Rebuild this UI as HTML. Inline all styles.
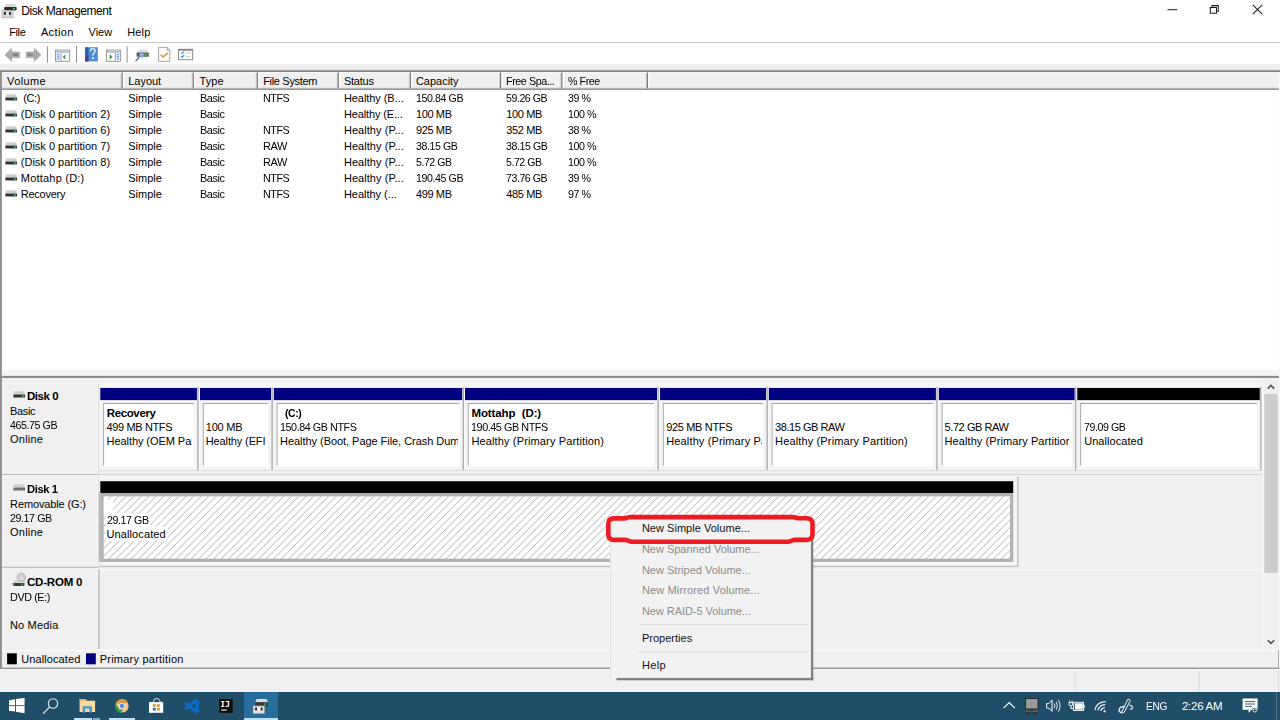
<!DOCTYPE html>
<html><head><meta charset="utf-8"><title>Disk Management</title>
<style>
html,body{margin:0;padding:0;width:1280px;height:720px;overflow:hidden;background:#fff;}
body{position:relative;font-family:"Liberation Sans",sans-serif;font-size:11px;}
body>div,body>svg,body>span{position:absolute;}
.t{position:absolute;white-space:pre;}
svg{display:block;overflow:visible;}
</style></head><body>
<svg style="left:0;top:0" width="1280" height="720" viewBox="0 0 1280 720">
<rect x="0.00" y="0.00" width="1280.00" height="64.00" fill="#fff"/>
<rect x="0.00" y="42.00" width="1280.00" height="1.00" fill="#c6c6c6"/>
<rect x="0.00" y="64.00" width="1280.00" height="628.00" fill="#f0f0f0"/>
<rect x="0.00" y="692.00" width="1280.00" height="28.00" fill="#204e68"/>
<rect x="2.00" y="72.00" width="1277.00" height="299.00" fill="#fff"/>
<rect x="0.00" y="69.70" width="1280.00" height="1.20" fill="#c4c4c4"/>
<rect x="0.00" y="70.60" width="1280.00" height="1.30" fill="#6e6e6e"/>
<rect x="2.00" y="72.90" width="1277.00" height="15.50" fill="#f0f0f0"/>
<rect x="2.00" y="71.90" width="1277.00" height="1.00" fill="#f7f7f7"/>
<rect x="2.00" y="88.35" width="1277.00" height="1.40" fill="#757575"/>
<rect x="2.00" y="87.60" width="1277.00" height="0.80" fill="#cfcfcf"/>
<rect x="121.35" y="72.60" width="1.50" height="15.80" fill="#7a7a7a"/>
<rect x="122.85" y="72.60" width="1.30" height="15.20" fill="#fdfdfd"/>
<rect x="120.50" y="73.20" width="0.85" height="15.00" fill="#cdcdcd"/>
<rect x="192.45" y="72.60" width="1.50" height="15.80" fill="#7a7a7a"/>
<rect x="193.95" y="72.60" width="1.30" height="15.20" fill="#fdfdfd"/>
<rect x="191.60" y="73.20" width="0.85" height="15.00" fill="#cdcdcd"/>
<rect x="256.55" y="72.60" width="1.50" height="15.80" fill="#7a7a7a"/>
<rect x="258.05" y="72.60" width="1.30" height="15.20" fill="#fdfdfd"/>
<rect x="255.70" y="73.20" width="0.85" height="15.00" fill="#cdcdcd"/>
<rect x="337.45" y="72.60" width="1.50" height="15.80" fill="#7a7a7a"/>
<rect x="338.95" y="72.60" width="1.30" height="15.20" fill="#fdfdfd"/>
<rect x="336.60" y="73.20" width="0.85" height="15.00" fill="#cdcdcd"/>
<rect x="409.65" y="72.60" width="1.50" height="15.80" fill="#7a7a7a"/>
<rect x="411.15" y="72.60" width="1.30" height="15.20" fill="#fdfdfd"/>
<rect x="408.80" y="73.20" width="0.85" height="15.00" fill="#cdcdcd"/>
<rect x="499.95" y="72.60" width="1.50" height="15.80" fill="#7a7a7a"/>
<rect x="501.45" y="72.60" width="1.30" height="15.20" fill="#fdfdfd"/>
<rect x="499.10" y="73.20" width="0.85" height="15.00" fill="#cdcdcd"/>
<rect x="561.15" y="72.60" width="1.50" height="15.80" fill="#7a7a7a"/>
<rect x="562.65" y="72.60" width="1.30" height="15.20" fill="#fdfdfd"/>
<rect x="560.30" y="73.20" width="0.85" height="15.00" fill="#cdcdcd"/>
<rect x="646.55" y="72.60" width="1.50" height="15.80" fill="#7a7a7a"/>
<rect x="648.05" y="72.60" width="1.30" height="15.20" fill="#fdfdfd"/>
<rect x="645.70" y="73.20" width="0.85" height="15.00" fill="#cdcdcd"/>
<rect x="0.00" y="70.60" width="1.00" height="598.40" fill="#8e8e8e"/>
<rect x="1.00" y="70.60" width="0.75" height="598.40" fill="#7e7e7e"/>
<rect x="1279.00" y="72.00" width="1.00" height="597.00" fill="#fafafa"/>
<rect x="2.00" y="370.30" width="1277.00" height="3.00" fill="#f1f1f1"/>
<rect x="3.00" y="373.00" width="1276.00" height="1.00" fill="#fbfbfb"/>
<rect x="2.00" y="374.00" width="1277.00" height="2.10" fill="#ececec"/>
<rect x="0.00" y="376.10" width="1279.00" height="1.75" fill="#808080"/>
<rect x="2.00" y="382.60" width="1261.00" height="1.00" fill="#f8f8f8"/>
<rect x="97.40" y="383.00" width="1.00" height="91.00" fill="#fbfbfb"/>
<rect x="98.20" y="383.00" width="0.90" height="91.00" fill="#d6d6d6"/>
<rect x="2.00" y="474.00" width="96.40" height="0.90" fill="#b0b0b0"/>
<rect x="98.40" y="474.00" width="1164.60" height="0.90" fill="#d0d0d0"/>
<rect x="99.50" y="469.80" width="1163.50" height="0.90" fill="#d4d4d4"/>
<rect x="97.40" y="476.00" width="1.00" height="91.00" fill="#fbfbfb"/>
<rect x="98.20" y="476.00" width="0.90" height="91.00" fill="#d6d6d6"/>
<rect x="2.00" y="566.80" width="96.40" height="0.90" fill="#adadad"/>
<rect x="99.30" y="476.50" width="918.50" height="90.00" fill="#f6f6f6"/>
<rect x="1017.10" y="476.50" width="1.40" height="90.50" fill="#bebebe"/>
<rect x="99.30" y="565.80" width="919.20" height="1.25" fill="#bebebe"/>
<rect x="99.30" y="568.90" width="1164.00" height="1.00" fill="#fbfbfb"/>
<rect x="97.60" y="569.00" width="1.00" height="81.00" fill="#fbfbfb"/>
<rect x="98.40" y="569.40" width="1.00" height="80.00" fill="#a4a4a4"/>
<rect x="2.00" y="649.80" width="1277.00" height="1.00" fill="#fcfcfc"/>
<rect x="0.00" y="667.60" width="1279.50" height="1.70" fill="#969696"/>
<rect x="0.00" y="669.20" width="1280.00" height="1.00" fill="#fafafa"/>
<rect x="7.10" y="653.30" width="9.70" height="11.00" fill="#000"/>
<rect x="86.00" y="653.30" width="9.80" height="11.00" fill="#000080"/>
<rect x="1278.00" y="650.50" width="1.00" height="17.30" fill="#a4a4a4"/>
<rect x="1074.40" y="671.00" width="1.00" height="20.50" fill="#dadada"/>
<rect x="1198.60" y="671.00" width="1.00" height="20.50" fill="#dadada"/>
<rect x="1278.20" y="671.00" width="1.00" height="20.50" fill="#dadada"/>
<rect x="1263.20" y="383.00" width="1.00" height="267.00" fill="#fbfbfb"/>
<rect x="1264.20" y="383.00" width="14.20" height="267.00" fill="#f0f0f0"/>
<rect x="1264.30" y="394.00" width="13.40" height="179.00" fill="#cdcdcd"/>
<path d="M1267.8 388.6 L1271 385.4 L1274.2 388.6" fill="none" stroke="#505050" stroke-width="1.5"/>
<path d="M1267.8 640.2 L1271 643.4 L1274.2 640.2" fill="none" stroke="#505050" stroke-width="1.5"/>
<rect x="99.30" y="383.00" width="1163.70" height="87.00" fill="#f6f6f6"/>
<rect x="100.30" y="386.90" width="96.60" height="1.10" fill="#fff"/>
<rect x="100.30" y="387.90" width="96.60" height="12.60" fill="#000080"/>
<rect x="100.30" y="400.50" width="96.60" height="69.30" fill="#f4f4f4"/>
<rect x="100.30" y="400.50" width="96.60" height="1.00" fill="#fdfdfd"/>
<rect x="103.10" y="403.00" width="90.80" height="63.60" fill="#fff"/>
<rect x="103.10" y="403.00" width="90.80" height="1.00" fill="#a2a2a2"/>
<rect x="103.10" y="403.00" width="1.00" height="62.60" fill="#a9a9a9"/>
<rect x="197.35" y="386.90" width="1.45" height="83.00" fill="#a8a8a8"/>
<rect x="198.80" y="386.90" width="0.90" height="83.00" fill="#fbfbfb"/>
<rect x="200.00" y="386.90" width="71.00" height="1.10" fill="#fff"/>
<rect x="200.00" y="387.90" width="71.00" height="12.60" fill="#000080"/>
<rect x="200.00" y="400.50" width="71.00" height="69.30" fill="#f4f4f4"/>
<rect x="200.00" y="400.50" width="71.00" height="1.00" fill="#fdfdfd"/>
<rect x="202.80" y="403.00" width="65.20" height="63.60" fill="#fff"/>
<rect x="202.80" y="403.00" width="65.20" height="1.00" fill="#a2a2a2"/>
<rect x="202.80" y="403.00" width="1.00" height="62.60" fill="#a9a9a9"/>
<rect x="271.45" y="386.90" width="1.45" height="83.00" fill="#a8a8a8"/>
<rect x="272.90" y="386.90" width="0.90" height="83.00" fill="#fbfbfb"/>
<rect x="273.80" y="386.90" width="188.40" height="1.10" fill="#fff"/>
<rect x="273.80" y="387.90" width="188.40" height="12.60" fill="#000080"/>
<rect x="273.80" y="400.50" width="188.40" height="69.30" fill="#f4f4f4"/>
<rect x="273.80" y="400.50" width="188.40" height="1.00" fill="#fdfdfd"/>
<rect x="276.60" y="403.00" width="182.60" height="63.60" fill="#fff"/>
<rect x="276.60" y="403.00" width="182.60" height="1.00" fill="#a2a2a2"/>
<rect x="276.60" y="403.00" width="1.00" height="62.60" fill="#a9a9a9"/>
<rect x="462.65" y="386.90" width="1.45" height="83.00" fill="#a8a8a8"/>
<rect x="464.10" y="386.90" width="0.90" height="83.00" fill="#fbfbfb"/>
<rect x="465.00" y="386.90" width="192.00" height="1.10" fill="#fff"/>
<rect x="465.00" y="387.90" width="192.00" height="12.60" fill="#000080"/>
<rect x="465.00" y="400.50" width="192.00" height="69.30" fill="#f4f4f4"/>
<rect x="465.00" y="400.50" width="192.00" height="1.00" fill="#fdfdfd"/>
<rect x="467.80" y="403.00" width="186.20" height="63.60" fill="#fff"/>
<rect x="467.80" y="403.00" width="186.20" height="1.00" fill="#a2a2a2"/>
<rect x="467.80" y="403.00" width="1.00" height="62.60" fill="#a9a9a9"/>
<rect x="657.45" y="386.90" width="1.45" height="83.00" fill="#a8a8a8"/>
<rect x="658.90" y="386.90" width="0.90" height="83.00" fill="#fbfbfb"/>
<rect x="660.00" y="386.90" width="106.00" height="1.10" fill="#fff"/>
<rect x="660.00" y="387.90" width="106.00" height="12.60" fill="#000080"/>
<rect x="660.00" y="400.50" width="106.00" height="69.30" fill="#f4f4f4"/>
<rect x="660.00" y="400.50" width="106.00" height="1.00" fill="#fdfdfd"/>
<rect x="662.80" y="403.00" width="100.20" height="63.60" fill="#fff"/>
<rect x="662.80" y="403.00" width="100.20" height="1.00" fill="#a2a2a2"/>
<rect x="662.80" y="403.00" width="1.00" height="62.60" fill="#a9a9a9"/>
<rect x="766.45" y="386.90" width="1.45" height="83.00" fill="#a8a8a8"/>
<rect x="767.90" y="386.90" width="0.90" height="83.00" fill="#fbfbfb"/>
<rect x="768.80" y="386.90" width="167.10" height="1.10" fill="#fff"/>
<rect x="768.80" y="387.90" width="167.10" height="12.60" fill="#000080"/>
<rect x="768.80" y="400.50" width="167.10" height="69.30" fill="#f4f4f4"/>
<rect x="768.80" y="400.50" width="167.10" height="1.00" fill="#fdfdfd"/>
<rect x="771.60" y="403.00" width="161.30" height="63.60" fill="#fff"/>
<rect x="771.60" y="403.00" width="161.30" height="1.00" fill="#a2a2a2"/>
<rect x="771.60" y="403.00" width="1.00" height="62.60" fill="#a9a9a9"/>
<rect x="936.35" y="386.90" width="1.45" height="83.00" fill="#a8a8a8"/>
<rect x="937.80" y="386.90" width="0.90" height="83.00" fill="#fbfbfb"/>
<rect x="938.80" y="386.90" width="135.80" height="1.10" fill="#fff"/>
<rect x="938.80" y="387.90" width="135.80" height="12.60" fill="#000080"/>
<rect x="938.80" y="400.50" width="135.80" height="69.30" fill="#f4f4f4"/>
<rect x="938.80" y="400.50" width="135.80" height="1.00" fill="#fdfdfd"/>
<rect x="941.60" y="403.00" width="130.00" height="63.60" fill="#fff"/>
<rect x="941.60" y="403.00" width="130.00" height="1.00" fill="#a2a2a2"/>
<rect x="941.60" y="403.00" width="1.00" height="62.60" fill="#a9a9a9"/>
<rect x="1075.05" y="386.90" width="1.45" height="83.00" fill="#a8a8a8"/>
<rect x="1076.50" y="386.90" width="0.90" height="83.00" fill="#fbfbfb"/>
<rect x="1077.30" y="386.90" width="182.50" height="1.10" fill="#fff"/>
<rect x="1077.30" y="387.90" width="182.50" height="12.60" fill="#000"/>
<rect x="1077.30" y="400.50" width="182.50" height="69.30" fill="#f4f4f4"/>
<rect x="1077.30" y="400.50" width="182.50" height="1.00" fill="#fdfdfd"/>
<rect x="1080.10" y="403.00" width="176.70" height="63.60" fill="#fff"/>
<rect x="1080.10" y="403.00" width="176.70" height="1.00" fill="#a2a2a2"/>
<rect x="1080.10" y="403.00" width="1.00" height="62.60" fill="#a9a9a9"/>
<rect x="1260.25" y="386.90" width="1.45" height="83.00" fill="#a8a8a8"/>
<rect x="1261.70" y="386.90" width="0.90" height="83.00" fill="#fbfbfb"/>
<rect x="100.30" y="481.20" width="912.90" height="11.80" fill="#000"/>
<defs><pattern id="hatch" width="7.5" height="7.5" patternUnits="userSpaceOnUse" x="103.7" y="496.3"><rect width="7.5" height="7.5" fill="#fff"/><path d="M-1 1 L1 -1 M-1 8.5 L8.5 -1 M6.5 8.5 L8.5 6.5" stroke="#9a9a9a" stroke-width="0.8" fill="none"/></pattern></defs>
<rect x="100.30" y="493.00" width="913.00" height="69.00" fill="#b2b2b2"/>
<rect x="103.70" y="496.40" width="906.30" height="62.30" fill="url(#hatch)"/>
<rect x="99.10" y="493.00" width="1.20" height="69.00" fill="#ababab"/>
<rect x="103.70" y="499.50" width="9.50" height="14.00" fill="#fff"/>
</svg>
<!-- title icon -->
<svg style="left:1px;top:3px" width="17" height="16" viewBox="0 0 17 16">
 <path d="M5.3 0.9 H14 L15.4 3.9 H3.4 Z" fill="#d9d9d9"/>
 <rect x="3.2" y="3.9" width="12.4" height="3.5" rx="0.8" fill="#2b2b2b"/>
 <rect x="11.8" y="4.8" width="2.3" height="2.1" fill="#27b34a"/>
 <rect x="1" y="7.4" width="11" height="7.4" fill="#d6d6d6" stroke="#a9a9a9" stroke-width="0.7"/>
 <rect x="2.9" y="8.9" width="2" height="2.9" rx="0.5" fill="#222"/>
 <rect x="8" y="8.9" width="2" height="2.9" rx="0.5" fill="#222"/>
 <rect x="5.4" y="9.2" width="2.2" height="2.4" fill="#f4f4f4"/>
</svg>
<!-- window controls -->
<svg style="left:1160px;top:0" width="120" height="22" viewBox="0 0 120 22">
 <path d="M7.5 9.7 H17.3" stroke="#2a2a2a" stroke-width="1.05"/>
 <path d="M50.3 7.5 H56.5 V13.3 H50.3 Z M52.1 7.5 V5.6 H58.3 V11.2 H56.5" fill="none" stroke="#1c1c1c" stroke-width="1.05"/>
 <path d="M92.8 4.9 L102.2 14.2 M102.2 4.9 L92.8 14.2" stroke="#222" stroke-width="1.1"/>
</svg>
<!-- toolbar -->
<svg style="left:0;top:43px" width="200" height="21" viewBox="0 0 200 21">
 <!-- back -->
 <path d="M4.9 11.8 L11.6 5.4 V9 H19.4 V14.6 H11.6 V18.3 Z" fill="#a9a9a9" stroke="#9a9a9a" stroke-width="0.6"/>
 <rect x="13" y="10.8" width="5" height="2.2" fill="#7d7d7d"/>
 <!-- forward -->
 <path d="M41 11.8 L34.3 5.4 V9 H26.4 V14.6 H34.3 V18.3 Z" fill="#a9a9a9" stroke="#9a9a9a" stroke-width="0.6"/>
 <rect x="27.6" y="10.8" width="5" height="2.2" fill="#8a8a8a"/>
 <rect x="46.9" y="3.2" width="1.0" height="16.6" fill="#8f8f8f"/>
 <!-- console tree -->
 <rect x="55.6" y="7.1" width="14.1" height="11.2" fill="#fff" stroke="#8e8e8e" stroke-width="0.9"/>
 <rect x="56" y="7.5" width="13.3" height="2.4" fill="#b9c3cf"/>
 <rect x="56" y="9.9" width="4.6" height="8" fill="#e4ecf7"/>
 <rect x="60.6" y="9.9" width="0.8" height="8" fill="#8e8e8e"/>
 <rect x="57.2" y="11.2" width="2" height="1" fill="#3f8de0"/><rect x="57.2" y="13.3" width="2" height="1" fill="#3f8de0"/><rect x="57.2" y="15.4" width="2" height="1" fill="#3f8de0"/>
 <path d="M65.3 11.4 L62.6 13.9 L65.3 16.4 Z" fill="#2f9a48"/>
 <rect x="76" y="3.2" width="1.0" height="16.6" fill="#8f8f8f"/>
 <!-- help -->
 <rect x="85.2" y="4.2" width="12.6" height="14.2" fill="#4a8fd6"/>
 <rect x="85.2" y="4.2" width="3.2" height="14.2" fill="#2f5fae"/>
 <rect x="85.2" y="12.6" width="3.2" height="5.8" fill="#4a3f9f"/>
 <path d="M90.6 8.2 Q90.6 5.6 92.8 5.6 Q95.1 5.6 95.1 7.9 Q95.1 9.3 93.9 10.2 Q92.9 11 92.9 12.6" fill="none" stroke="#e9f1fb" stroke-width="1.35"/>
 <rect x="92.1" y="14.2" width="1.7" height="1.9" fill="#f4f8fd"/>
 <!-- console 2 -->
 <rect x="106.4" y="7.1" width="14.1" height="11.2" fill="#fff" stroke="#8e8e8e" stroke-width="0.9"/>
 <rect x="106.8" y="7.5" width="13.3" height="2.4" fill="#b9c3cf"/>
 <rect x="115.5" y="9.9" width="4.6" height="8" fill="#e4ecf7"/>
 <rect x="114.8" y="9.9" width="0.8" height="8" fill="#8e8e8e"/>
 <rect x="116.9" y="11.2" width="2" height="1" fill="#3f8de0"/><rect x="116.9" y="13.3" width="2" height="1" fill="#3f8de0"/><rect x="116.9" y="15.4" width="2" height="1" fill="#3f8de0"/>
 <path d="M109.6 11.2 L112.6 13.9 L109.6 16.6 Z" fill="#2f9a48"/>
 <rect x="126.6" y="3.2" width="1.0" height="16.6" fill="#8f8f8f"/>
 <!-- disk + magnifier -->
 <path d="M138.6 6.6 H146.8 L148.4 9.6 H136.8 Z" fill="#dcdcdc"/>
 <rect x="136.6" y="9.6" width="12.2" height="4.2" rx="0.6" fill="#5a5a5a"/>
 <rect x="143.6" y="10.5" width="3.9" height="2.4" fill="#2fae52"/>
 <circle cx="141.6" cy="11.9" r="2.3" fill="#9cc3ef" fill-opacity="0.8" stroke="#6a8fc8" stroke-width="0.7"/>
 <path d="M139.4 14 L135.6 18.2" stroke="#5a6f93" stroke-width="1.3"/>
 <!-- doc with check -->
 <path d="M158.6 4.4 H167 L169.8 7.2 V18.4 H158.6 Z" fill="#fdfdfd" stroke="#9c9c9c" stroke-width="0.9"/>
 <path d="M167 4.4 V7.2 H169.8" fill="none" stroke="#9c9c9c" stroke-width="0.8"/>
 <path d="M160.6 11.8 L163.2 14.0 L167.8 9.8" fill="none" stroke="#db8c22" stroke-width="1.35"/>
 <!-- list w/ checks -->
 <rect x="178.5" y="6.3" width="14.2" height="10.4" fill="#fff" stroke="#7e7e7e" stroke-width="0.9"/>
 <rect x="178.5" y="6.3" width="14.2" height="1.4" fill="#7e7e7e"/>
 <path d="M181 9.3 L182.2 10.5 L184.2 8.3 M181 13 L182.2 14.2 L184.2 12" fill="none" stroke="#3f9be8" stroke-width="1.2"/>
 <rect x="185.8" y="9.4" width="5" height="1" fill="#d0d0d0"/><rect x="185.8" y="13.1" width="5" height="1" fill="#d0d0d0"/>
</svg>
<svg style="left:12px;top:572px" width="15" height="15" viewBox="0 0 15 15"><path d="M2.2 8 H12.4 L13.5 11 H0.7 Z" fill="#d6d6d6"/><circle cx="9.4" cy="5.4" r="4.2" fill="#d4d4d4" stroke="#a9a9a9" stroke-width="0.9"/><circle cx="9.4" cy="5.4" r="1.9" fill="none" stroke="#cacaca" stroke-width="0.8"/><circle cx="9.4" cy="5.4" r="0.8" fill="#fff"/><rect x="0.9" y="11" width="11.5" height="3" rx="0.4" fill="#3c3c3c"/><rect x="0.9" y="11" width="1.8" height="3" fill="#6a6a6a"/><rect x="9.1" y="11.5" width="2.2" height="2.1" fill="#2faa4d"/></svg>
<!-- taskbar -->
<div style="left:243.8px;top:692px;width:34px;height:28px;background:#296d9b"></div>
<div style="left:243.8px;top:718px;width:34px;height:2px;background:#b9e1f8"></div>
<div style="left:74px;top:718px;width:18.4px;height:2px;background:#bfe4fb"></div>
<div style="left:92.8px;top:718px;width:7.2px;height:2px;background:#88a6d6"></div>
<div style="left:108.8px;top:718px;width:26.2px;height:2px;background:#bfe4fb"></div>
<svg style="left:0;top:692px" width="290" height="28" viewBox="0 0 290 28">
 <!-- windows logo -->
 <path d="M9 8.2 L15 7.3 V13 H9 Z M15.9 7.1 L24.6 5.9 V13 H15.9 Z M9 13.8 H15 V19.6 L9 18.8 Z M15.9 13.8 H24.6 V21.2 L15.9 19.8 Z" fill="#fff"/>
 <!-- search -->
 <circle cx="53" cy="11.5" r="4.7" fill="none" stroke="#e6ecf0" stroke-width="1.1"/>
 <path d="M49.5 15.2 L43.2 21.6" stroke="#e6ecf0" stroke-width="1.2"/>
 <!-- folder -->
 <path d="M79.6 7 H85.6 L86.8 8.8 H95.1 V20 H79.6 Z" fill="#f9dc9c"/>
 <path d="M79.6 7 H85.6 L86.8 8.8 H79.6 Z" fill="#eeb060"/>
 <path d="M82.6 20.8 V14.2 H91.9 V20.8 H89.4 V16.6 H85.1 V20.8 Z" fill="#4b93dd"/>
 <!-- chrome -->
 <circle cx="122" cy="14" r="6.6" fill="#f1c78a"/>
 <path d="M116 11.2 A6.6 6.6 0 0 1 127.8 10.4 L122 12 Z" fill="#e09a3e"/>
 <path d="M115.5 11.6 L119.4 17.4 L123 17.6 L120.6 20.9 A6.6 6.6 0 0 1 115.5 11.6 Z" fill="#2e9a44"/>
 <circle cx="122" cy="14" r="3" fill="#e8f1fb"/>
 <circle cx="122" cy="14" r="2.2" fill="#4a90e0"/>
 <!-- store -->
 <path d="M153.6 10 Q153.6 6.4 156.6 6.4 Q159.6 6.4 160.4 10" fill="none" stroke="#dfe7ee" stroke-width="1"/>
 <rect x="149" y="10.1" width="14.2" height="10.7" fill="#fff"/>
 <rect x="152.8" y="12.2" width="3" height="2.6" fill="#e09433"/><rect x="156.8" y="12.2" width="3" height="2.6" fill="#e09433"/>
 <rect x="152.8" y="15.8" width="3" height="2.7" fill="#1f6fd0"/><rect x="156.8" y="15.8" width="3" height="2.7" fill="#e09433"/>
 <!-- vscode -->
 <path d="M195.2 6.4 L198.9 8.2 V19.8 L195.2 21.6 L184 11.6 L185.3 9.9 L187.2 10.4 L192 14 L187.2 17.6 L185.3 18.1 L184 16.4 Z" fill="#0a6cc4"/>
 <path d="M195.4 11 L191.4 14 L195.4 17 Z" fill="#204e68"/>
 <!-- IJ -->
 <rect x="219.3" y="7.1" width="13.4" height="13.7" fill="#0a0a0a"/>
 <path d="M221.2 9 H224.4 V10 H223.5 V14 H224.4 V15 H221.2 V14 H222.1 V10 H221.2 Z M225.6 9 H229.2 V13.4 Q229.2 15.1 227.2 15.1 Q225.8 15.1 225.4 14.4 L225.9 13.4 Q226.4 14 227 14 Q227.8 14 227.8 13.2 V10 H225.6 Z" fill="#fff"/>
 <rect x="221.2" y="17.5" width="5.6" height="1.1" fill="#fff"/>
 <!-- disk mgmt -->
 <path d="M256.6 7.1 H266.4 L268 10.2 H255.2 Z" fill="#dcdcdc"/>
 <rect x="255.2" y="10.2" width="12.8" height="4.2" rx="0.6" fill="#3a3a3a"/>
 <rect x="264.2" y="11" width="2" height="2.4" fill="#2faa4d"/>
 <rect x="253.2" y="14" width="11.2" height="7.4" fill="#e2e2e2" stroke="#b4b4b4" stroke-width="0.6"/>
 <rect x="255.1" y="15.6" width="1.9" height="2.8" rx="0.4" fill="#222"/><rect x="260.7" y="15.6" width="1.9" height="2.8" rx="0.4" fill="#222"/>
 <rect x="257.5" y="15.8" width="2.8" height="2.4" fill="#fafafa"/>
</svg>
<!-- tray -->
<svg style="left:990px;top:692px" width="290" height="28" viewBox="0 0 290 28">
 <path d="M13.6 16.2 L19.2 10.6 L24.8 16.2" fill="none" stroke="#fff" stroke-width="1.1"/>
 <rect x="35.4" y="6.4" width="12.6" height="10.6" fill="#9a9a9a" stroke="#1a1a1a" stroke-width="0.8"/>
 <rect x="35.6" y="18.2" width="5.2" height="2.8" rx="0.8" fill="#6a5a5a"/><rect x="42.6" y="18.2" width="5.2" height="2.8" rx="0.8" fill="#6a5a5a"/>
 <rect x="35.6" y="20.4" width="5.2" height="1" fill="#1a1a1a"/><rect x="42.6" y="20.4" width="5.2" height="1" fill="#1a1a1a"/>
 <path d="M56.6 11.6 H58.8 L62 8.2 V19.4 L58.8 16 H56.6 Z" fill="none" stroke="#fff" stroke-width="1"/>
 <path d="M64.2 11.6 Q65.6 13.8 64.2 16 M66.2 9.8 Q68.6 13.8 66.2 17.8 M68.4 8 Q71.6 13.8 68.4 19.6" fill="none" stroke="#fff" stroke-width="0.9"/>
 <rect x="84.9" y="11.3" width="7.9" height="6.3" fill="#fff"/><rect x="83.6" y="10.3" width="10" height="8.2" fill="none" stroke="#fff" stroke-width="0.9"/><rect x="93.8" y="12.8" width="0.9" height="3.2" fill="#fff"/>
 <path d="M79.7 8.6 V10.4 M82.1 8.6 V10.4 M79 10.6 H82.8 V12.2 Q82.8 13.8 80.9 13.8 Q79 13.8 79 12.2 Z M80.9 13.8 V16.6 H83.4" fill="none" stroke="#fff" stroke-width="1"/>
 <path d="M104.8 19.4 A9.6 9.6 0 0 1 114.4 9.8 M107.8 19.4 A6.6 6.6 0 0 1 114.4 12.8 M110.8 19.4 A3.6 3.6 0 0 1 114.4 15.8" fill="none" stroke="#eef3f6" stroke-width="1.25" transform="rotate(8 114.4 19.4)"/>
 <circle cx="114.6" cy="19.3" r="1.15" fill="#fff"/>
 <path d="M137.6 7.6 Q139.6 6.6 140.4 8.4 L134.4 20 Q132.6 22 131.6 20.4 Z" fill="none" stroke="#fff" stroke-width="1"/>
 <path d="M134.2 14.6 Q129.4 14.4 129 18 Q129 20.6 132 20.6 M139.4 13.2 Q142.8 13.6 142.4 16 Q141.8 17.6 139.8 17.2" fill="none" stroke="#fff" stroke-width="1.1"/>
 <!-- notification -->
 <path d="M252.6 6.6 H267.6 V17.8 H261.4 L258.6 21 V17.8 H252.6 Z" fill="#fff"/>
 <path d="M255 9.6 H265.2 M255 12 H265.2 M255 14.4 H261.6" stroke="#204e68" stroke-width="0.9"/>
 <circle cx="264.8" cy="18.4" r="2.6" fill="#204e68"/><circle cx="264.8" cy="18.4" r="1.7" fill="none" stroke="#fff" stroke-width="0.9"/>
 <rect x="286.2" y="0" width="0.8" height="28" fill="#5b7d91"/>
</svg>
<svg style="left:5.2px;top:93.8px" width="12.2" height="7" viewBox="0 0 12.2 7"><path d="M1.3 0.2 H10.9 L12.1 3.5 H0.3 Z" fill="#cfcfcf"/><rect x="0.4" y="3.5" width="11.7" height="3.0" rx="0.5" fill="#333333"/><rect x="8.9" y="4.1" width="2.3" height="1.9" fill="#2faa4d"/></svg>
<svg style="left:5.2px;top:109.8px" width="12.2" height="7" viewBox="0 0 12.2 7"><path d="M1.3 0.2 H10.9 L12.1 3.5 H0.3 Z" fill="#cfcfcf"/><rect x="0.4" y="3.5" width="11.7" height="3.0" rx="0.5" fill="#333333"/><rect x="8.9" y="4.1" width="2.3" height="1.9" fill="#2faa4d"/></svg>
<svg style="left:5.2px;top:125.8px" width="12.2" height="7" viewBox="0 0 12.2 7"><path d="M1.3 0.2 H10.9 L12.1 3.5 H0.3 Z" fill="#cfcfcf"/><rect x="0.4" y="3.5" width="11.7" height="3.0" rx="0.5" fill="#333333"/><rect x="8.9" y="4.1" width="2.3" height="1.9" fill="#2faa4d"/></svg>
<svg style="left:5.2px;top:141.8px" width="12.2" height="7" viewBox="0 0 12.2 7"><path d="M1.3 0.2 H10.9 L12.1 3.5 H0.3 Z" fill="#cfcfcf"/><rect x="0.4" y="3.5" width="11.7" height="3.0" rx="0.5" fill="#333333"/><rect x="8.9" y="4.1" width="2.3" height="1.9" fill="#2faa4d"/></svg>
<svg style="left:5.2px;top:157.8px" width="12.2" height="7" viewBox="0 0 12.2 7"><path d="M1.3 0.2 H10.9 L12.1 3.5 H0.3 Z" fill="#cfcfcf"/><rect x="0.4" y="3.5" width="11.7" height="3.0" rx="0.5" fill="#333333"/><rect x="8.9" y="4.1" width="2.3" height="1.9" fill="#2faa4d"/></svg>
<svg style="left:5.2px;top:173.8px" width="12.2" height="7" viewBox="0 0 12.2 7"><path d="M1.3 0.2 H10.9 L12.1 3.5 H0.3 Z" fill="#cfcfcf"/><rect x="0.4" y="3.5" width="11.7" height="3.0" rx="0.5" fill="#333333"/><rect x="8.9" y="4.1" width="2.3" height="1.9" fill="#2faa4d"/></svg>
<svg style="left:5.2px;top:189.8px" width="12.2" height="7" viewBox="0 0 12.2 7"><path d="M1.3 0.2 H10.9 L12.1 3.5 H0.3 Z" fill="#cfcfcf"/><rect x="0.4" y="3.5" width="11.7" height="3.0" rx="0.5" fill="#333333"/><rect x="8.9" y="4.1" width="2.3" height="1.9" fill="#2faa4d"/></svg>
<svg style="left:12.7px;top:390.9px" width="12.2" height="7" viewBox="0 0 12.2 7"><path d="M1.3 0.2 H10.9 L12.1 3.5 H0.3 Z" fill="#cfcfcf"/><rect x="0.4" y="3.5" width="11.7" height="3.0" rx="0.5" fill="#333333"/><rect x="8.9" y="4.1" width="2.3" height="1.9" fill="#2faa4d"/></svg>
<svg style="left:12.6px;top:483.6px" width="12.2" height="7" viewBox="0 0 12.2 7"><path d="M1.3 0.2 H10.9 L12.1 3.5 H0.3 Z" fill="#cfcfcf"/><rect x="0.4" y="3.5" width="11.7" height="3.0" rx="0.5" fill="#6f6f6f"/></svg>

<span class="t" style="left:21.2px;top:3.1px;font-size:12px;line-height:16px;letter-spacing:-0.43px;color:#000;">Disk Management</span>
<span class="t" style="left:9.2px;top:24.8px;font-size:11px;line-height:14px;letter-spacing:-0.38px;color:#000;">File</span>
<span class="t" style="left:40.9px;top:24.8px;font-size:11px;line-height:14px;letter-spacing:0.38px;color:#000;">Action</span>
<span class="t" style="left:88.5px;top:24.8px;font-size:11px;line-height:14px;letter-spacing:0.01px;color:#000;">View</span>
<span class="t" style="left:127.3px;top:24.8px;font-size:11px;line-height:14px;letter-spacing:0.12px;color:#000;">Help</span>
<span class="t" style="left:7.0px;top:74.2px;font-size:11px;line-height:14px;letter-spacing:0.40px;color:#000;">Volume</span>
<span class="t" style="left:128.2px;top:74.2px;font-size:11px;line-height:14px;letter-spacing:-0.01px;color:#000;">Layout</span>
<span class="t" style="left:199.5px;top:74.2px;font-size:11px;line-height:14px;letter-spacing:0.11px;color:#000;">Type</span>
<span class="t" style="left:263.2px;top:74.2px;font-size:11px;line-height:14px;letter-spacing:-0.32px;color:#000;">File System</span>
<span class="t" style="left:343.9px;top:74.2px;font-size:11px;line-height:14px;letter-spacing:-0.24px;color:#000;">Status</span>
<span class="t" style="left:415.9px;top:74.2px;font-size:11px;line-height:14px;letter-spacing:-0.01px;color:#000;">Capacity</span>
<span class="t" style="left:506.2px;top:74.2px;font-size:11px;line-height:14px;letter-spacing:-0.45px;color:#000;transform:scaleX(0.978);transform-origin:0 0;">Free Spa...</span>
<span class="t" style="left:568.4px;top:74.2px;font-size:11px;line-height:14px;letter-spacing:-0.45px;color:#000;transform:scaleX(0.972);transform-origin:0 0;">% Free</span>
<span class="t" style="left:23.2px;top:91.2px;font-size:11px;line-height:14px;letter-spacing:-0.36px;color:#000;">(C:)</span>
<span class="t" style="left:128.2px;top:91.2px;font-size:11px;line-height:14px;letter-spacing:0.03px;color:#000;">Simple</span>
<span class="t" style="left:199.5px;top:91.2px;font-size:11px;line-height:14px;letter-spacing:-0.45px;color:#000;transform:scaleX(0.996);transform-origin:0 0;">Basic</span>
<span class="t" style="left:263.2px;top:91.2px;font-size:11px;line-height:14px;letter-spacing:-0.45px;color:#000;transform:scaleX(0.979);transform-origin:0 0;">NTFS</span>
<span class="t" style="left:343.9px;top:91.2px;font-size:11px;line-height:14px;letter-spacing:-0.06px;color:#000;">Healthy (B...</span>
<span class="t" style="left:415.9px;top:91.2px;font-size:11px;line-height:14px;letter-spacing:-0.45px;color:#000;transform:scaleX(0.970);transform-origin:0 0;">150.84 GB</span>
<span class="t" style="left:506.2px;top:91.2px;font-size:11px;line-height:14px;letter-spacing:-0.45px;color:#000;transform:scaleX(0.962);transform-origin:0 0;">59.26 GB</span>
<span class="t" style="left:568.4px;top:91.2px;font-size:11px;line-height:14px;letter-spacing:-0.45px;color:#000;transform:scaleX(0.969);transform-origin:0 0;">39 %</span>
<span class="t" style="left:20.8px;top:107.2px;font-size:11px;line-height:14px;letter-spacing:-0.00px;color:#000;">(Disk 0 partition 2)</span>
<span class="t" style="left:128.2px;top:107.2px;font-size:11px;line-height:14px;letter-spacing:0.03px;color:#000;">Simple</span>
<span class="t" style="left:199.5px;top:107.2px;font-size:11px;line-height:14px;letter-spacing:-0.45px;color:#000;transform:scaleX(0.996);transform-origin:0 0;">Basic</span>
<span class="t" style="left:343.9px;top:107.2px;font-size:11px;line-height:14px;letter-spacing:-0.13px;color:#000;">Healthy (E...</span>
<span class="t" style="left:415.9px;top:107.2px;font-size:11px;line-height:14px;letter-spacing:-0.36px;color:#000;">100 MB</span>
<span class="t" style="left:506.2px;top:107.2px;font-size:11px;line-height:14px;letter-spacing:-0.36px;color:#000;">100 MB</span>
<span class="t" style="left:568.4px;top:107.2px;font-size:11px;line-height:14px;letter-spacing:-0.45px;color:#000;transform:scaleX(0.973);transform-origin:0 0;">100 %</span>
<span class="t" style="left:20.8px;top:123.2px;font-size:11px;line-height:14px;letter-spacing:-0.00px;color:#000;">(Disk 0 partition 6)</span>
<span class="t" style="left:128.2px;top:123.2px;font-size:11px;line-height:14px;letter-spacing:0.03px;color:#000;">Simple</span>
<span class="t" style="left:199.5px;top:123.2px;font-size:11px;line-height:14px;letter-spacing:-0.45px;color:#000;transform:scaleX(0.996);transform-origin:0 0;">Basic</span>
<span class="t" style="left:263.2px;top:123.2px;font-size:11px;line-height:14px;letter-spacing:-0.45px;color:#000;transform:scaleX(0.979);transform-origin:0 0;">NTFS</span>
<span class="t" style="left:343.9px;top:123.2px;font-size:11px;line-height:14px;letter-spacing:0.06px;color:#000;">Healthy (P...</span>
<span class="t" style="left:415.9px;top:123.2px;font-size:11px;line-height:14px;letter-spacing:-0.36px;color:#000;">925 MB</span>
<span class="t" style="left:506.2px;top:123.2px;font-size:11px;line-height:14px;letter-spacing:-0.36px;color:#000;">352 MB</span>
<span class="t" style="left:568.4px;top:123.2px;font-size:11px;line-height:14px;letter-spacing:-0.45px;color:#000;transform:scaleX(0.969);transform-origin:0 0;">38 %</span>
<span class="t" style="left:20.8px;top:139.2px;font-size:11px;line-height:14px;letter-spacing:-0.00px;color:#000;">(Disk 0 partition 7)</span>
<span class="t" style="left:128.2px;top:139.2px;font-size:11px;line-height:14px;letter-spacing:0.03px;color:#000;">Simple</span>
<span class="t" style="left:199.5px;top:139.2px;font-size:11px;line-height:14px;letter-spacing:-0.45px;color:#000;transform:scaleX(0.996);transform-origin:0 0;">Basic</span>
<span class="t" style="left:263.2px;top:139.2px;font-size:11px;line-height:14px;letter-spacing:-0.45px;color:#000;transform:scaleX(0.997);transform-origin:0 0;">RAW</span>
<span class="t" style="left:343.9px;top:139.2px;font-size:11px;line-height:14px;letter-spacing:0.06px;color:#000;">Healthy (P...</span>
<span class="t" style="left:415.9px;top:139.2px;font-size:11px;line-height:14px;letter-spacing:-0.45px;color:#000;transform:scaleX(0.965);transform-origin:0 0;">38.15 GB</span>
<span class="t" style="left:506.2px;top:139.2px;font-size:11px;line-height:14px;letter-spacing:-0.45px;color:#000;transform:scaleX(0.965);transform-origin:0 0;">38.15 GB</span>
<span class="t" style="left:568.4px;top:139.2px;font-size:11px;line-height:14px;letter-spacing:-0.45px;color:#000;transform:scaleX(0.973);transform-origin:0 0;">100 %</span>
<span class="t" style="left:20.8px;top:155.2px;font-size:11px;line-height:14px;letter-spacing:-0.00px;color:#000;">(Disk 0 partition 8)</span>
<span class="t" style="left:128.2px;top:155.2px;font-size:11px;line-height:14px;letter-spacing:0.03px;color:#000;">Simple</span>
<span class="t" style="left:199.5px;top:155.2px;font-size:11px;line-height:14px;letter-spacing:-0.45px;color:#000;transform:scaleX(0.996);transform-origin:0 0;">Basic</span>
<span class="t" style="left:263.2px;top:155.2px;font-size:11px;line-height:14px;letter-spacing:-0.45px;color:#000;transform:scaleX(0.997);transform-origin:0 0;">RAW</span>
<span class="t" style="left:343.9px;top:155.2px;font-size:11px;line-height:14px;letter-spacing:0.06px;color:#000;">Healthy (P...</span>
<span class="t" style="left:415.9px;top:155.2px;font-size:11px;line-height:14px;letter-spacing:-0.45px;color:#000;transform:scaleX(0.959);transform-origin:0 0;">5.72 GB</span>
<span class="t" style="left:506.2px;top:155.2px;font-size:11px;line-height:14px;letter-spacing:-0.45px;color:#000;transform:scaleX(0.959);transform-origin:0 0;">5.72 GB</span>
<span class="t" style="left:568.4px;top:155.2px;font-size:11px;line-height:14px;letter-spacing:-0.45px;color:#000;transform:scaleX(0.973);transform-origin:0 0;">100 %</span>
<span class="t" style="left:20.8px;top:171.2px;font-size:11px;line-height:14px;letter-spacing:0.21px;color:#000;">Mottahp (D:)</span>
<span class="t" style="left:128.2px;top:171.2px;font-size:11px;line-height:14px;letter-spacing:0.03px;color:#000;">Simple</span>
<span class="t" style="left:199.5px;top:171.2px;font-size:11px;line-height:14px;letter-spacing:-0.45px;color:#000;transform:scaleX(0.996);transform-origin:0 0;">Basic</span>
<span class="t" style="left:263.2px;top:171.2px;font-size:11px;line-height:14px;letter-spacing:-0.45px;color:#000;transform:scaleX(0.979);transform-origin:0 0;">NTFS</span>
<span class="t" style="left:343.9px;top:171.2px;font-size:11px;line-height:14px;letter-spacing:0.06px;color:#000;">Healthy (P...</span>
<span class="t" style="left:415.9px;top:171.2px;font-size:11px;line-height:14px;letter-spacing:-0.45px;color:#000;transform:scaleX(0.970);transform-origin:0 0;">190.45 GB</span>
<span class="t" style="left:506.2px;top:171.2px;font-size:11px;line-height:14px;letter-spacing:-0.45px;color:#000;transform:scaleX(0.962);transform-origin:0 0;">73.76 GB</span>
<span class="t" style="left:568.4px;top:171.2px;font-size:11px;line-height:14px;letter-spacing:-0.45px;color:#000;transform:scaleX(0.969);transform-origin:0 0;">39 %</span>
<span class="t" style="left:20.8px;top:187.2px;font-size:11px;line-height:14px;letter-spacing:-0.25px;color:#000;">Recovery</span>
<span class="t" style="left:128.2px;top:187.2px;font-size:11px;line-height:14px;letter-spacing:0.03px;color:#000;">Simple</span>
<span class="t" style="left:199.5px;top:187.2px;font-size:11px;line-height:14px;letter-spacing:-0.45px;color:#000;transform:scaleX(0.996);transform-origin:0 0;">Basic</span>
<span class="t" style="left:263.2px;top:187.2px;font-size:11px;line-height:14px;letter-spacing:-0.45px;color:#000;transform:scaleX(0.979);transform-origin:0 0;">NTFS</span>
<span class="t" style="left:343.9px;top:187.2px;font-size:11px;line-height:14px;letter-spacing:-0.02px;color:#000;">Healthy (...</span>
<span class="t" style="left:415.9px;top:187.2px;font-size:11px;line-height:14px;letter-spacing:-0.36px;color:#000;">499 MB</span>
<span class="t" style="left:506.2px;top:187.2px;font-size:11px;line-height:14px;letter-spacing:-0.36px;color:#000;">485 MB</span>
<span class="t" style="left:568.4px;top:187.2px;font-size:11px;line-height:14px;letter-spacing:-0.45px;color:#000;transform:scaleX(0.969);transform-origin:0 0;">97 %</span>
<span class="t" style="left:27.0px;top:389.1px;font-size:11.5px;line-height:15px;letter-spacing:-0.44px;color:#000;font-weight:bold;">Disk 0</span>
<span class="t" style="left:10.1px;top:404.2px;font-size:11px;line-height:14px;letter-spacing:-0.35px;color:#000;">Basic</span>
<span class="t" style="left:10.1px;top:418.2px;font-size:11px;line-height:14px;letter-spacing:-0.45px;color:#000;transform:scaleX(0.972);transform-origin:0 0;">465.75 GB</span>
<span class="t" style="left:10.1px;top:432.2px;font-size:11px;line-height:14px;letter-spacing:0.22px;color:#000;">Online</span>
<span class="t" style="left:27.0px;top:482.2px;font-size:11.5px;line-height:15px;letter-spacing:-0.45px;color:#000;font-weight:bold;transform:scaleX(0.980);transform-origin:0 0;">Disk 1</span>
<span class="t" style="left:10.1px;top:496.8px;font-size:11px;line-height:14px;letter-spacing:-0.13px;color:#000;">Removable (G:)</span>
<span class="t" style="left:10.1px;top:511.0px;font-size:11px;line-height:14px;letter-spacing:-0.45px;color:#000;transform:scaleX(0.974);transform-origin:0 0;">29.17 GB</span>
<span class="t" style="left:10.1px;top:525.0px;font-size:11px;line-height:14px;letter-spacing:0.22px;color:#000;">Online</span>
<span class="t" style="left:27.0px;top:575.2px;font-size:11.5px;line-height:15px;letter-spacing:-0.20px;color:#000;font-weight:bold;">CD-ROM 0</span>
<span class="t" style="left:9.9px;top:590.0px;font-size:11px;line-height:14px;letter-spacing:-0.45px;color:#000;transform:scaleX(0.987);transform-origin:0 0;">DVD (E:)</span>
<span class="t" style="left:9.9px;top:617.8px;font-size:11px;line-height:14px;letter-spacing:0.20px;color:#000;">No Media</span>
<span class="t" style="left:21.2px;top:651.7px;font-size:11px;line-height:14px;letter-spacing:0.10px;color:#000;">Unallocated</span>
<span class="t" style="left:99.7px;top:651.7px;font-size:11px;line-height:14px;letter-spacing:0.23px;color:#000;">Primary partition</span>
<span class="t" style="left:106.7px;top:405.5px;font-size:11.5px;line-height:15px;letter-spacing:-0.36px;color:#000;font-weight:bold;">Recovery</span>
<span class="t" style="left:106.5px;top:420.2px;font-size:11px;line-height:14px;letter-spacing:-0.37px;color:#000;">499 MB NTFS</span>
<span class="t" style="left:106.5px;top:434.2px;font-size:11px;line-height:14px;letter-spacing:-0.06px;color:#000;width:85.1px;overflow:hidden;">Healthy (OEM Partition)</span>
<span class="t" style="left:205.8px;top:420.2px;font-size:11px;line-height:14px;letter-spacing:-0.22px;color:#000;">100 MB</span>
<span class="t" style="left:205.8px;top:434.2px;font-size:11px;line-height:14px;letter-spacing:-0.13px;color:#000;width:60.5px;overflow:hidden;">Healthy (EFI System Partition)</span>
<span class="t" style="left:285.3px;top:405.5px;font-size:11.5px;line-height:15px;letter-spacing:-0.45px;color:#000;font-weight:bold;transform:scaleX(0.905);transform-origin:0 0;">(C:)</span>
<span class="t" style="left:280.1px;top:420.2px;font-size:11px;line-height:14px;letter-spacing:-0.45px;color:#000;transform:scaleX(0.979);transform-origin:0 0;">150.84 GB NTFS</span>
<span class="t" style="left:280.1px;top:434.2px;font-size:11px;line-height:14px;letter-spacing:-0.05px;color:#000;width:177.5px;overflow:hidden;">Healthy (Boot, Page File, Crash Dump, Primary Partition)</span>
<span class="t" style="left:471.4px;top:405.5px;font-size:11.5px;line-height:15px;letter-spacing:-0.09px;color:#000;font-weight:bold;">Mottahp  (D:)</span>
<span class="t" style="left:471.4px;top:420.2px;font-size:11px;line-height:14px;letter-spacing:-0.45px;color:#000;transform:scaleX(0.984);transform-origin:0 0;">190.45 GB NTFS</span>
<span class="t" style="left:471.4px;top:434.2px;font-size:11px;line-height:14px;letter-spacing:0.14px;color:#000;">Healthy (Primary Partition)</span>
<span class="t" style="left:666.3px;top:420.2px;font-size:11px;line-height:14px;letter-spacing:-0.35px;color:#000;">925 MB NTFS</span>
<span class="t" style="left:666.3px;top:434.2px;font-size:11px;line-height:14px;letter-spacing:0.13px;color:#000;width:95.6px;overflow:hidden;">Healthy (Primary Partition)</span>
<span class="t" style="left:775.1px;top:420.2px;font-size:11px;line-height:14px;letter-spacing:-0.45px;color:#000;">38.15 GB RAW</span>
<span class="t" style="left:775.1px;top:434.2px;font-size:11px;line-height:14px;letter-spacing:0.14px;color:#000;">Healthy (Primary Partition)</span>
<span class="t" style="left:944.6px;top:420.2px;font-size:11px;line-height:14px;letter-spacing:-0.43px;color:#000;">5.72 GB RAW</span>
<span class="t" style="left:944.6px;top:434.2px;font-size:11px;line-height:14px;letter-spacing:0.08px;color:#000;width:124.8px;overflow:hidden;">Healthy (Primary Partition)</span>
<span class="t" style="left:1084.2px;top:420.2px;font-size:11px;line-height:14px;letter-spacing:-0.45px;color:#000;transform:scaleX(0.969);transform-origin:0 0;">79.09 GB</span>
<span class="t" style="left:1084.2px;top:434.2px;font-size:11px;line-height:14px;letter-spacing:0.06px;color:#000;">Unallocated</span>
<span class="t" style="left:106.5px;top:512.8px;font-size:11px;line-height:14px;letter-spacing:-0.45px;color:#000;transform:scaleX(0.972);transform-origin:0 0;background:#fff;padding:0 2px 0 1px;margin-left:-1px;">29.17 GB</span>
<span class="t" style="left:106.5px;top:526.9px;font-size:11px;line-height:14px;letter-spacing:0.11px;color:#000;background:#fff;padding:0 2px 0 1px;margin-left:-1px;">Unallocated</span>

<svg style="left:0;top:0" width="1280" height="720" viewBox="0 0 1280 720">
<defs><filter id="mb" x="-5%" y="-5%" width="110%" height="110%"><feGaussianBlur stdDeviation="0.45"/></filter></defs>
<g filter="url(#mb)"><rect x="810.6" y="522" width="2.7" height="158.3" fill="#858285"/><rect x="616.5" y="677.6" width="196.8" height="2.7" fill="#858285"/></g>
<rect x="610" y="516.5" width="200.8" height="161.3" fill="#f2f2f2"/>
<rect x="610" y="516.5" width="1" height="161.3" fill="#e2e2e2"/>
<rect x="638.8" y="624" width="169.8" height="1" fill="#dddddd"/>
<rect x="638.8" y="651.6" width="169.8" height="1" fill="#dddddd"/>
<path d="M614 518.4 L625 518.4 L629 517.1 L793 517.1 L798 518.3 L806.5 518.3 Q812.5 518.3 812.5 524 L812.5 534.5 Q812.5 539.9 806 539.9 L794 539.9 L789 541.7 L631 541.7 L626 539.9 L614 539.9 Q608.3 539.9 608.3 534.5 L608.3 524 Q608.3 518.4 614 518.4 Z" fill="none" stroke="#ed1c24" stroke-width="4.6" stroke-linejoin="round"/>
</svg>


<span class="t" style="left:641.9px;top:521.4px;font-size:11px;line-height:14px;letter-spacing:0.03px;color:#111;">New Simple Volume...</span>
<span class="t" style="left:641.9px;top:542.0px;font-size:11px;line-height:14px;letter-spacing:-0.01px;color:#8b8b8b;">New Spanned Volume...</span>
<span class="t" style="left:641.9px;top:562.5px;font-size:11px;line-height:14px;letter-spacing:0.01px;color:#8b8b8b;">New Striped Volume...</span>
<span class="t" style="left:641.9px;top:583.1px;font-size:11px;line-height:14px;letter-spacing:0.14px;color:#8b8b8b;">New Mirrored Volume...</span>
<span class="t" style="left:641.9px;top:603.6px;font-size:11px;line-height:14px;letter-spacing:-0.05px;color:#8b8b8b;">New RAID-5 Volume...</span>
<span class="t" style="left:641.9px;top:630.9px;font-size:11px;line-height:14px;letter-spacing:0.02px;color:#111;">Properties</span>
<span class="t" style="left:641.9px;top:658.2px;font-size:11px;line-height:14px;letter-spacing:0.39px;color:#111;">Help</span>
<span class="t" style="left:1145.9px;top:699.0px;font-size:11.5px;line-height:15px;letter-spacing:-0.45px;color:#fff;transform:scaleX(0.891);transform-origin:0 0;">ENG</span>
<span class="t" style="left:1181.9px;top:699.0px;font-size:11.5px;line-height:15px;letter-spacing:-0.25px;color:#fff;">2:26 AM</span>
</body></html>
